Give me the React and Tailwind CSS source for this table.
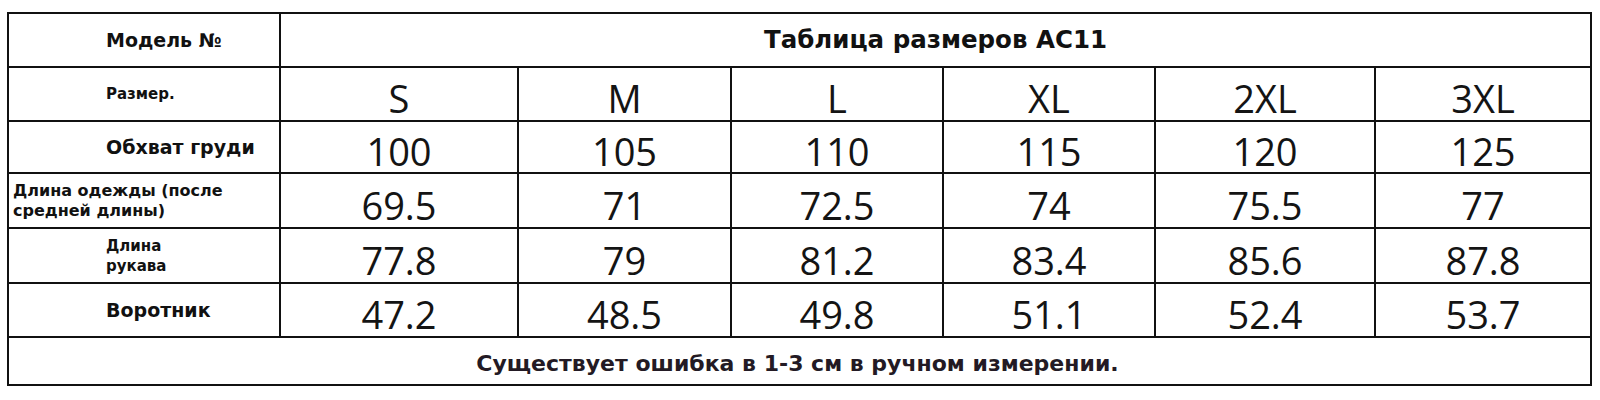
import React from "react";

const sizes = ["S", "M", "L", "XL", "2XL", "3XL"];
const rows = [
  { label: "Обхват груди", values: ["100", "105", "110", "115", "120", "125"], cls: "h-[50px] pl-[97px] text-[19px]" },
  { label: "Длина одежды (после средней длины)", values: ["69.5", "71", "72.5", "74", "75.5", "77"], cls: "h-[53px] pl-[4px] pr-[30px] text-[16px]" },
  { label: "Длина\nрукава", values: ["77.8", "79", "81.2", "83.4", "85.6", "87.8"], cls: "h-[53px] pl-[97px] text-[15px]" },
  { label: "Воротник", values: ["47.2", "48.5", "49.8", "51.1", "52.4", "53.7"], cls: "h-[52px] pl-[97px] text-[19px]" },
];

function Num({ children }) {
  return (
    <div className="bg-white flex items-center justify-center pt-[8px] text-[38px] leading-none text-[#141414] font-['Open_Sans','Noto_Sans',sans-serif]">
      {children}
    </div>
  );
}

export default function App() {
  return (
    <div className="w-[1600px] h-[400px] bg-white pt-[12px] pl-[7px] font-['DejaVu_Sans','Noto_Sans',sans-serif]">
      <div className="w-[1585px] bg-[#111] p-[2px] grid grid-cols-[270px_236px_211px_210px_210px_218px_214px] gap-[2px]">
        <div className="h-[52px] bg-white flex items-center pl-[97px] text-[19px] font-bold text-[#111]">
          Модель №
        </div>
        <div className="col-span-6 bg-white flex items-center justify-center text-[24.5px] font-bold text-[#111]">
          Таблица размеров АС11
        </div>

        <div className="h-[52px] bg-white flex items-center pl-[97px] text-[15px] font-bold text-[#111]">
          Размер.
        </div>
        {sizes.map((s) => (
          <Num key={s}>{s}</Num>
        ))}

        {rows.map((r) => (
          <React.Fragment key={r.label}>
            <div
              className={
                "bg-white flex items-center font-bold leading-[20px] text-[#111] whitespace-pre-line " +
                r.cls
              }
            >
              {r.label}
            </div>
            {r.values.map((v, i) => (
              <Num key={i}>{v}</Num>
            ))}
          </React.Fragment>
        ))}

        <div className="h-[46px] col-span-7 bg-white flex items-center justify-center pr-[4px] pt-[4px] text-[22px] font-bold text-[#231a24]">
          Существует ошибка в 1-3 см в ручном измерении.
        </div>
      </div>
    </div>
  );
}
